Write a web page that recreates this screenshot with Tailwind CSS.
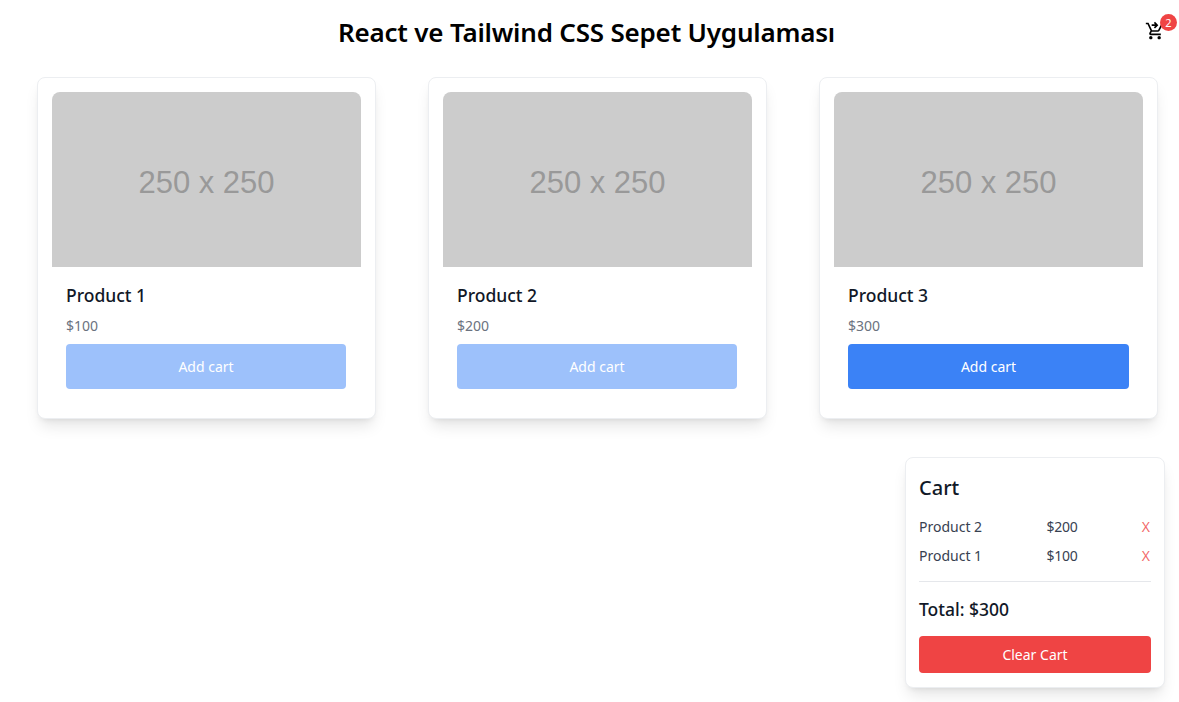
<!doctype html>
<html><head><meta charset="utf-8"><script src="https://cdn.jsdelivr.net/npm/@tailwindcss/browser@4"></script></head>
<body class="bg-white overflow-hidden">
<div class="relative h-[702px] font-['Noto_Sans',sans-serif] text-black">
  <header class="h-[77px] pt-[13px] flex justify-center pr-[6px]">
    <h1 class="text-[26px] leading-[38px] font-semibold tracking-[-0.2px]">React ve Tailwind CSS Sepet Uygulaması</h1>
  </header>
  <div class="absolute left-[1145px] top-[21px] w-[20px] h-[20px]">
    <svg viewBox="0 0 24 24" class="w-[20px] h-[20px]" fill="#000"><path d="M7 18c-1.1 0-1.99.9-1.99 2S5.9 22 7 22s2-.9 2-2-.9-2-2-2zm10 0c-1.1 0-1.99.9-1.99 2s.89 2 1.99 2 2-.9 2-2-.9-2-2-2zm-8.9-5h7.45c.75 0 1.41-.41 1.75-1.03L21 4.96 19.25 4l-3.7 7H8.53L4.27 2H1v2h2l3.6 7.59-1.35 2.44C4.52 15.37 5.48 17 7 17h12v-2H7l1.1-2zM12 1l4 4-4 4-1.41-1.41L12.17 6H8V4h4.17l-1.59-1.59L12 1z"/></svg>
    <span class="absolute left-[15px] top-[-7px] w-[17px] h-[17px] rounded-full bg-[#ef4444] text-white text-[11px] leading-[17px] text-center">2</span>
  </div>
  <main class="pl-[37px] pr-[21px]">
    <div class="grid grid-cols-3 gap-x-[52px]">
      <article class="h-[342px] bg-white border border-[#eceef1] rounded-lg shadow-lg p-[14px]">
        <div class="h-[175px] pt-[8px] rounded-t-lg bg-[#cccccc] flex items-center justify-center font-['Liberation_Sans',sans-serif] text-[31px] text-[#999999]">250 x 250</div>
        <div class="pl-[14px] pr-[15px] pt-[14px]">
          <h2 class="text-[17.5px] leading-[28px] font-medium text-[#111827]">Product 1</h2>
          <p class="mt-[7px] text-sm leading-[20px] text-[#6b7280]">$100</p>
          <button class="mt-[8px] w-full h-[45px] rounded bg-[#9dc1fb] text-white text-sm">Add cart</button>
        </div>
      </article>
      <article class="h-[342px] bg-white border border-[#eceef1] rounded-lg shadow-lg p-[14px]">
        <div class="h-[175px] pt-[8px] rounded-t-lg bg-[#cccccc] flex items-center justify-center font-['Liberation_Sans',sans-serif] text-[31px] text-[#999999]">250 x 250</div>
        <div class="pl-[14px] pr-[15px] pt-[14px]">
          <h2 class="text-[17.5px] leading-[28px] font-medium text-[#111827]">Product 2</h2>
          <p class="mt-[7px] text-sm leading-[20px] text-[#6b7280]">$200</p>
          <button class="mt-[8px] w-full h-[45px] rounded bg-[#9dc1fb] text-white text-sm">Add cart</button>
        </div>
      </article>
      <article class="h-[342px] bg-white border border-[#eceef1] rounded-lg shadow-lg p-[14px]">
        <div class="h-[175px] pt-[8px] rounded-t-lg bg-[#cccccc] flex items-center justify-center font-['Liberation_Sans',sans-serif] text-[31px] text-[#999999]">250 x 250</div>
        <div class="px-[14px] pt-[14px]">
          <h2 class="text-[17.5px] leading-[28px] font-medium text-[#111827]">Product 3</h2>
          <p class="mt-[7px] text-sm leading-[20px] text-[#6b7280]">$300</p>
          <button class="mt-[8px] w-full h-[45px] rounded bg-[#3b82f6] text-white text-sm">Add cart</button>
        </div>
      </article>
    </div>
    <aside class="mt-[38px] ml-auto mr-[-7px] w-[260px] h-[231px] bg-white border border-[#eceef1] rounded-lg shadow-lg p-[13px]">
      <h2 class="mt-[1px] text-xl leading-[32px] font-medium text-[#111827]">Cart</h2>
      <ul class="mt-[8px] text-sm text-[#374151]">
        <li class="flex justify-between h-[29px] leading-[29px]"><span class="w-[127px]">Product 2</span><span class="tracking-[-0.2px]">$200</span><span class="w-[73px] pr-[1px] text-right text-[#ef4444]/80">X</span></li>
        <li class="flex justify-between h-[29px] leading-[29px]"><span class="w-[127px]">Product 1</span><span class="tracking-[-0.2px]">$100</span><span class="w-[73px] pr-[1px] text-right text-[#ef4444]/80">X</span></li>
      </ul>
      <div class="mt-[11px] border-t border-[#e5e7eb] pt-[14px]">
        <p class="text-[17.5px] leading-[27px] font-medium text-[#111827]">Total: $300</p>
        <button class="mt-[13px] w-full h-[37px] rounded bg-[#ef4444] text-white text-sm">Clear Cart</button>
      </div>
    </aside>
  </main>
</div>
</body></html>
